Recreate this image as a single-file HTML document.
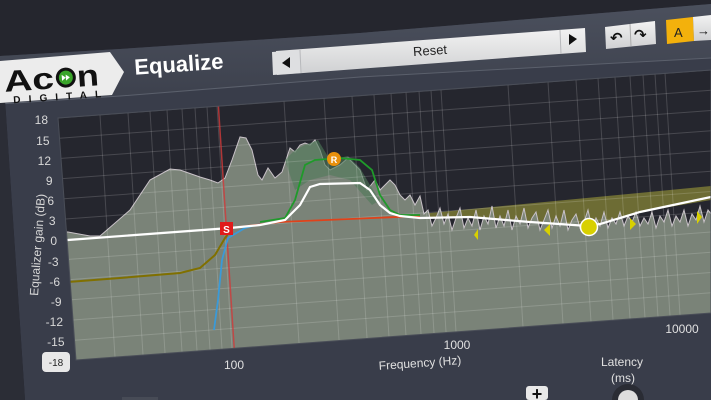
<!DOCTYPE html>
<html><head><meta charset="utf-8"><style>
html,body{margin:0;padding:0;width:711px;height:400px;overflow:hidden;background:#25262e;font-family:"Liberation Sans","DejaVu Sans",sans-serif}
svg{display:block}
</style></head><body>
<svg width="711" height="400" viewBox="0 0 711 400" xmlns="http://www.w3.org/2000/svg" font-family="Liberation Sans, DejaVu Sans, sans-serif">
<defs>
<linearGradient id="hdr" x1="0" y1="0" x2="0" y2="1"><stop offset="0" stop-color="#4b505d"/><stop offset="1" stop-color="#3c404c"/></linearGradient>
<linearGradient id="btn" x1="0" y1="0" x2="0" y2="1"><stop offset="0" stop-color="#f2f2f2"/><stop offset="1" stop-color="#cfd0d2"/></linearGradient>
<clipPath id="plot"><polygon points="58,118 300,100 711,70 711,313 76,360"/></clipPath>
</defs>
<polygon points="0,56 120,49 360,33 711,4 711,400 25,400 5,100 0,100" fill="#393d4a"/>
<polygon points="0,56 120,49 360,33 711,4 711,58 360,77 120,96 0,104" fill="url(#hdr)"/>
<polyline points="0,104 120,96 360,77 711,58" stroke="#5b606c" stroke-width="1" fill="none"/>
<polygon points="0,100 5,100 25,400 0,400" fill="#2b2d36"/>
<!-- logo -->
<polygon points="0,61 110,52 124,72 112,95 0,103" fill="#ececec"/>
<g transform="rotate(-4 60 80)">
<text x="4" y="88" font-size="30" font-weight="bold" fill="#111" textLength="50" lengthAdjust="spacingAndGlyphs">Ac</text>
<circle cx="66" cy="78" r="10" fill="#111"/><circle cx="66" cy="78" r="7" fill="#3aa52a"/>
<polygon points="62,75 66,78 62,81" fill="#fff"/><polygon points="66,75 70,78 66,81" fill="#fff"/>
<text x="77" y="88" font-size="30" font-weight="bold" fill="#111" textLength="22" lengthAdjust="spacingAndGlyphs">n</text>
<text x="12" y="100" font-size="10" font-weight="bold" fill="#111" textLength="88" lengthAdjust="spacing">DIGITAL</text>
<text x="135" y="80" font-size="22" font-weight="bold" fill="#fff">Equalize</text>
</g>
<!-- preset bar -->
<polygon points="276,51 585,28 586,52 277,75" fill="url(#btn)"/>
<polygon points="272,52 300,50 301,73 273,75" fill="#dedfe1"/>
<line x1="300" y1="50" x2="301" y2="73" stroke="#b8b9bc"/>
<line x1="560" y1="30" x2="561" y2="54" stroke="#b8b9bc"/>
<polygon points="282,63 290,57 290,68" fill="#111"/>
<polygon points="577,39 569,34 569,45" fill="#111"/>
<text x="430" y="55" font-size="13" fill="#222" text-anchor="middle" transform="rotate(-4 430 50)">Reset</text>
<polygon points="605,27 655,21 656,44 606,49" fill="url(#btn)"/>
<line x1="630" y1="24" x2="631" y2="46" stroke="#aaa"/>
<text x="610" y="43" font-size="15" font-weight="bold" fill="#111">↶</text>
<text x="634" y="40" font-size="15" font-weight="bold" fill="#111">↷</text>
<polygon points="666,20 693,17 694,41 667,44" fill="#f3b10c"/>
<text x="674" y="37" font-size="13" fill="#222">A</text>
<polygon points="693,17 711,15 711,40 694,41" fill="url(#btn)"/>
<text x="697" y="35" font-size="13" font-weight="bold" fill="#111">→</text>
<!-- plot -->
<polygon points="58,118 300,100 711,70 711,313 76,360" fill="#25262e"/>
<g clip-path="url(#plot)">
<polygon points="420,214 711,186 711,200 640,212 588,226 470,217 420,218" fill="#b6b23a" opacity="0.5"/>
<path d="M60,232 L68,232 90,236 100,236 130,210 150,180 170,169 180,170 200,177 210,180 218,183 225,178 232,160 240,137 246,138 252,150 258,175 262,180 268,168 275,178 282,172 290,148 295,152 300,145 305,143 310,145 315,140 320,150 325,165 330,170 340,165 348,158 355,165 360,170 367,190 375,180 380,190 390,180 395,185 400,195 405,200 410,195 415,205 420,196 424,214 428,210 432,226 436,218 440,208 444,224 448,214 452,230 456,218 460,208 464,228 468,218 472,226 476,210 480,230 484,216 488,224 492,206 496,228 500,216 504,226 508,210 512,230 516,216 520,224 524,208 528,228 532,218 536,212 540,230 544,220 548,210 552,228 556,216 560,226 564,210 568,230 572,220 576,214 580,228 584,222 588,210 592,228 596,218 600,226 604,212 608,228 612,218 616,224 620,212 624,226 628,216 632,222 636,212 640,226 644,218 648,224 652,212 656,228 660,216 664,222 668,210 672,226 676,216 680,222 684,210 688,226 692,214 696,220 700,206 704,222 708,210 711,214 L711,320 L60,370 Z" fill="#7e887c" fill-opacity="0.95" stroke="#c9c2c8" stroke-width="1"/>
<path d="M285,160 L295,150 305,145 318,140 330,160 348,156 360,168 370,185 380,200 372,205 350,180 330,175 310,180 295,190 Z" fill="#4f7a58" opacity="0.6"/>
<g stroke="#ffffff" stroke-opacity="0.16" stroke-width="1" fill="none">
<line x1="58" y1="118" x2="711" y2="70"/><line x1="59.5" y1="138.2" x2="711" y2="90.3"/><line x1="61" y1="158.4" x2="711" y2="110.5"/><line x1="62.5" y1="178.6" x2="711" y2="130.8"/><line x1="64" y1="198.8" x2="711" y2="151"/><line x1="65.5" y1="219" x2="711" y2="171.3"/><line x1="67" y1="239.2" x2="711" y2="191.5"/><line x1="68.5" y1="259.4" x2="711" y2="211.8"/><line x1="70" y1="279.6" x2="711" y2="232"/><line x1="71.5" y1="299.8" x2="711" y2="252.3"/><line x1="73" y1="320" x2="711" y2="272.5"/><line x1="74.5" y1="340.2" x2="711" y2="292.8"/>
<line x1="100" y1="115" x2="115" y2="357"/><line x1="128" y1="113" x2="143" y2="355"/><line x1="150" y1="111" x2="165" y2="353"/><line x1="167" y1="110" x2="182" y2="352"/><line x1="182" y1="109" x2="197" y2="351"/><line x1="195" y1="108" x2="210" y2="350"/><line x1="207" y1="107" x2="222" y2="349"/><line x1="217" y1="106" x2="232" y2="348"/><line x1="284" y1="101" x2="299" y2="343"/><line x1="324" y1="98" x2="339" y2="340"/><line x1="352" y1="96" x2="367" y2="338"/><line x1="374" y1="95" x2="389" y2="337"/><line x1="391" y1="93" x2="406" y2="336"/><line x1="406" y1="92" x2="421" y2="334"/><line x1="419" y1="91" x2="434" y2="333"/><line x1="431" y1="90" x2="446" y2="332"/><line x1="441" y1="90" x2="456" y2="332"/><line x1="508" y1="85" x2="523" y2="327"/><line x1="548" y1="82" x2="563" y2="324"/><line x1="576" y1="80" x2="591" y2="322"/><line x1="598" y1="78" x2="613" y2="320"/><line x1="615" y1="77" x2="630" y2="319"/><line x1="630" y1="76" x2="645" y2="318"/><line x1="643" y1="75" x2="658" y2="317"/><line x1="655" y1="74" x2="670" y2="316"/><line x1="665" y1="73" x2="680" y2="315"/>
</g>
<line x1="218" y1="100" x2="235" y2="360" stroke="#d23a3a" stroke-width="1.5" opacity="0.8"/>
<path d="M60,283 L68,282 120,278 180,273 200,268 215,255 225,238 232,228" stroke="#807000" stroke-width="2" fill="none"/>
<path d="M214,330 L218,300 222,260 228,238 245,228 260,224" stroke="#3a9ad8" stroke-width="1.8" fill="none"/>
<path d="M230,228 L280,222 420,216" stroke="#e0421a" stroke-width="1.8" fill="none"/>
<path d="M260,222 L285,218 295,200 305,165 315,160 340,158 360,160 372,170 380,195 390,210 400,215 420,215" stroke="#1f9a2a" stroke-width="1.8" fill="none"/>
<path d="M60,241 L68,240 230,228 260,225 285,220 300,205 310,187 320,184 360,183 370,190 380,205 390,213 400,216 420,218 470,217 530,222 588,226 600,224 640,212 711,197" stroke="#fff" stroke-width="2.2" fill="none"/>
</g>
<polygon points="58,118 300,100 711,70 711,313 76,360" fill="none" stroke="#4a4e58"/>
<rect x="220" y="222" width="13" height="13" fill="#e01b1b"/><text x="226.5" y="233" font-size="10" font-weight="bold" fill="#fff" text-anchor="middle">S</text>
<circle cx="334" cy="159" r="7" fill="#e8900c"/><text x="334" y="163" font-size="9" font-weight="bold" fill="#fff" text-anchor="middle">R</text>
<circle cx="589" cy="227" r="8.5" fill="#d8d000" stroke="#fff" stroke-width="1.5"/>
<polygon points="478,229 478,240 474,235" fill="#d8d000"/><polygon points="550,224 550,236 544,230" fill="#d8d000"/><polygon points="630,218 630,230 636,224" fill="#d8d000"/><polygon points="697,211 697,224 702,217" fill="#d8d000"/>
<g font-size="12" fill="#d8d8d8" text-anchor="end">
<text x="48" y="124">18</text><text x="49.5" y="145">15</text><text x="51" y="165">12</text><text x="52.5" y="185">9</text><text x="54" y="205">6</text><text x="55.5" y="225">3</text><text x="57" y="245">0</text><text x="58.5" y="266">-3</text><text x="60" y="286">-6</text><text x="61.5" y="306">-9</text><text x="63" y="326">-12</text><text x="64.5" y="346">-15</text>
</g>
<rect x="42" y="352" width="28" height="20" rx="4" fill="#e8e8e8"/><text x="56" y="366" font-size="10" fill="#222" text-anchor="middle">-18</text>
<text transform="translate(38,296) rotate(-86)" font-size="12" fill="#d8d8d8">Equalizer gain (dB)</text>
<g font-size="12" fill="#e0e0e0" text-anchor="middle">
<text x="234" y="369">100</text><text x="457" y="349">1000</text><text x="682" y="333">10000</text>
<text x="420" y="367" transform="rotate(-4 420 363)">Frequency (Hz)</text>
<text x="622" y="366">Latency</text><text x="623" y="382">(ms)</text>
</g>
<rect x="526" y="386" width="22" height="14" rx="3" fill="#e8e8e8"/><text x="537" y="400" font-size="18" font-weight="bold" fill="#111" text-anchor="middle">+</text>
<path d="M612,400 A16,16 0 0 1 644,400 Z" fill="#2a2c34"/><path d="M618,400 A10,10 0 0 1 638,400 Z" fill="#ddd"/>
<rect x="122" y="397" width="36" height="3" fill="#474b56"/>
</svg>
</body></html>
